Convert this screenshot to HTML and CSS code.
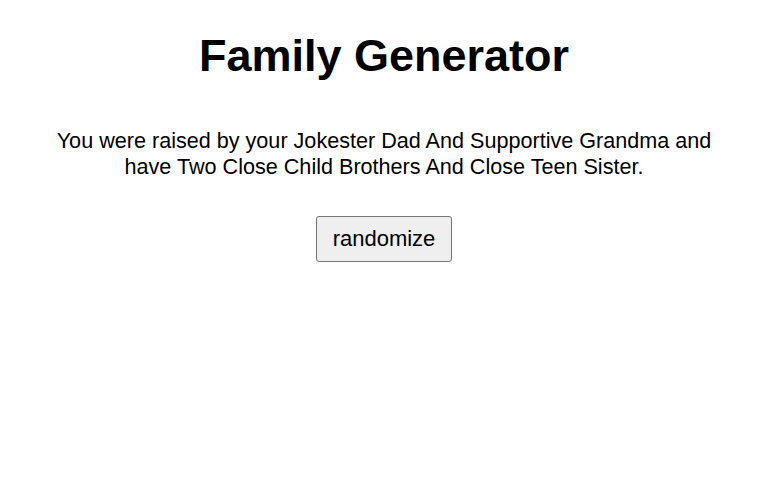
FILE: index.html
```html
<!DOCTYPE html>
<html lang="en">
<head>
<meta charset="utf-8">
<title>Family Generator</title>
<link rel="stylesheet" href="styles.css">
</head>
<body>
<main class="app">
  <h1 class="title">Family Generator</h1>
  <p class="family">You were raised by your Jokester Dad And Supportive Grandma and have Two Close Child Brothers And Close Teen Sister.</p>
  <button class="randomize" type="button">randomize</button>
</main>
</body>
</html>
```

FILE: styles.css
```css
body {
  margin: 0;
  background: #fff;
  color: #000;
  font-family: "Liberation Sans", Arial, sans-serif;
}

.app {
  display: flex;
  flex-direction: column;
  align-items: center;
  text-align: center;
  padding: 28px 40px 0;
}

.title {
  margin: 0;
  font-size: 45px;
  font-weight: bold;
  line-height: 56px;
}

.family {
  margin: 44px 0 0;
  font-size: 21.6px;
  line-height: 26px;
}

.randomize {
  margin-top: 36px;
  font-family: inherit;
  font-size: 22px;
  padding: 0 16px;
  height: 46px;
  color: #000;
  background: #efefef;
  border: 1px solid #767676;
  border-radius: 3px;
}
```
